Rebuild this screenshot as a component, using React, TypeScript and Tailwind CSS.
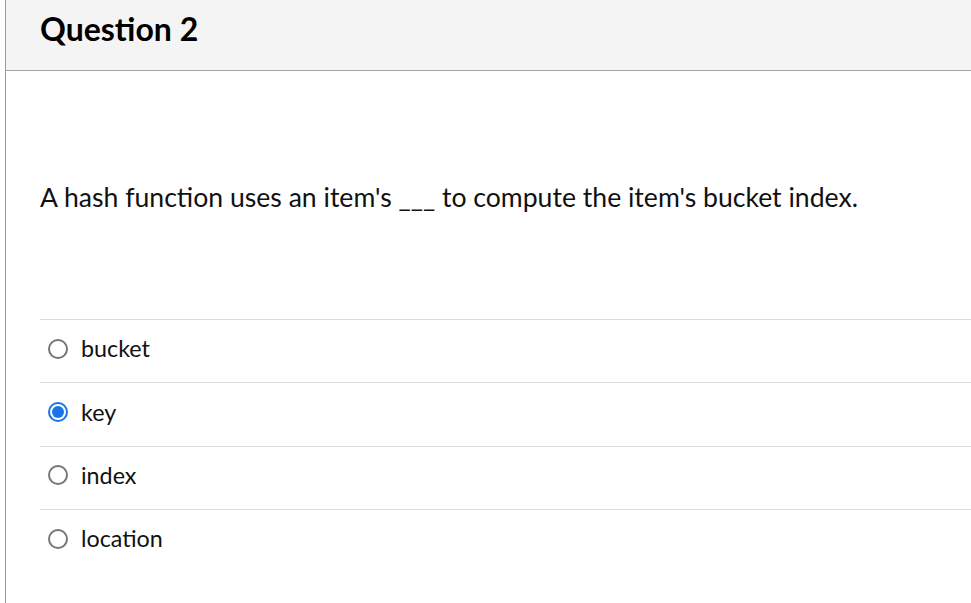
const options = [
  { id: 'a', label: 'bucket', checked: false },
  { id: 'b', label: 'key', checked: true },
  { id: 'c', label: 'index', checked: false },
  { id: 'd', label: 'location', checked: false },
];

const Radio = ({ checked }: { checked: boolean }) =>
  checked ? (
    <span className="flex h-[20px] w-[20px] items-center justify-center rounded-full border-2 border-[#1a73e8]">
      <span className="h-[12px] w-[12px] rounded-full bg-[#1a73e8]" />
    </span>
  ) : (
    <span className="h-[20px] w-[20px] rounded-full border-2 border-[#767676] bg-white" />
  );

const App = () => {
  return (
    <div className="min-h-[603px] bg-white font-['Lato',sans-serif] text-[#111]">
      <div className="ml-[5px] min-h-[603px] border-l border-[#9a9a9a]">
        {/* Header */}
        <div className="flex h-[71px] items-center border-b border-[#a5a5a5] bg-[#f4f4f4] pb-[12px] pl-[34px]">
          <h2 className="text-[32px] font-bold leading-none text-black">Question 2</h2>
        </div>

        {/* Body */}
        <div className="pl-[34px]">
          <p className="pt-[110px] pb-[106px] text-[26.6px] leading-[32px]">
            A hash function uses an item's ___ to compute the item's bucket index.
          </p>

          <div>
            {options.map((opt) => (
              <label
                key={opt.id}
                className="flex h-[63.4px] cursor-pointer items-center border-t border-[#dcdcdc] pb-[5px]"
              >
                <span className="ml-[8px] mr-[13px] flex items-center">
                  <Radio checked={opt.checked} />
                </span>
                <span className="text-[23.3px]">{opt.label}</span>
              </label>
            ))}
          </div>
        </div>
      </div>
    </div>
  );
};

export default App;
